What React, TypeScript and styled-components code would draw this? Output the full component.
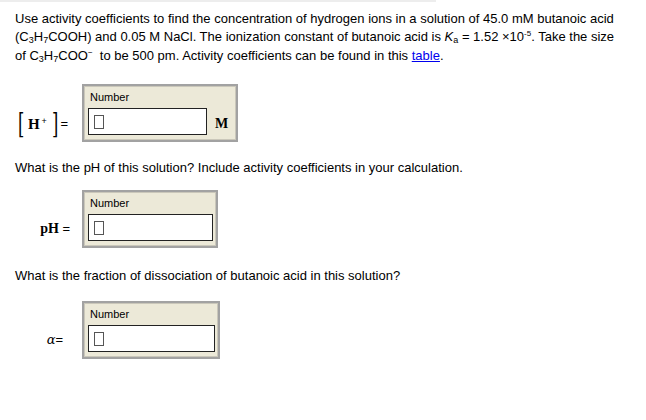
import React from "react";
import styled, { createGlobalStyle } from "styled-components";

const Global = createGlobalStyle`
  html, body { margin: 0; padding: 0; background: #fff; }
  body { font-family: "Liberation Sans", Arial, sans-serif; color: #000; }
`;

const Page = styled.div`
  width: 646px;
  height: 420px;
  box-sizing: border-box;
  padding: 10px 0 0 15px;
  position: relative;
`;

const TopRule = styled.div`
  position: absolute;
  left: 0;
  top: 0;
  width: 436px;
  height: 2px;
  background: #ededed;
`;

const Para = styled.p`
  margin: 0;
  font-size: 13px;
  line-height: 18px;
  white-space: nowrap;
`;

const Line = styled.span<{ $pt?: number }>`
  display: block;
  padding-top: ${(p) => p.$pt ?? 0}px;
`;

const Sub = styled.sub`
  font-size: 9px;
  vertical-align: -2px;
  line-height: 0;
`;

const Sup = styled.sup`
  font-size: 8px;
  vertical-align: 5px;
  line-height: 0;
`;

const Link = styled.a`
  color: #0000ee;
  text-decoration: underline;
`;

const Row = styled.div<{ $mt: number }>`
  display: flex;
  align-items: flex-end;
  margin-top: ${(p) => p.$mt}px;
`;

const Label = styled.div<{ $pr: number; $pb: number }>`
  flex: none;
  width: 67px;
  box-sizing: border-box;
  display: flex;
  justify-content: flex-end;
  align-items: center;
  padding-right: ${(p) => p.$pr}px;
  padding-bottom: ${(p) => p.$pb}px;
  font-family: "Liberation Serif", "Times New Roman", serif;
  font-size: 14px;
  line-height: 16px;
  white-space: nowrap;
`;

const Bold = styled.span`
  font-weight: bold;
`;

const Bracket = styled.span<{ $ml?: number; $mr?: number }>`
  font-family: "DejaVu Serif", serif;
  font-size: 27px;
  font-weight: normal;
  line-height: 16px;
  transform: scaleX(0.6);
  display: inline-block;
  margin-left: ${(p) => p.$ml ?? 0}px;
  margin-right: ${(p) => p.$mr ?? 0}px;
`;

const HBase = styled.span`
  font-weight: bold;
  font-size: 15px;
  margin-left: 1px;
`;

const Plus = styled.span`
  font-family: "Liberation Sans", Arial, sans-serif;
  font-size: 9px;
  align-self: flex-start;
  margin: -3px 3px 0 2px;
`;

const Alpha = styled.span`
  font-family: "DejaVu Serif", serif;
  font-style: italic;
  font-size: 13px;
`;

const Eq = styled.span`
  font-family: "Liberation Sans", Arial, sans-serif;
  font-size: 13px;
`;

const Box = styled.div<{ $w: number }>`
  flex: none;
  width: ${(p) => p.$w}px;
  box-sizing: border-box;
  background: #ece9d8;
  border: 2px solid #a2a2a2;
  box-shadow: inset 1px 1px 0 #cac7ba, inset -1px -1px 0 #cac7ba;
  padding: 5px 3px 5px 4px;
`;

const BoxLabel = styled.div`
  font-size: 11px;
  margin: 0 0 4px 2px;
  line-height: 13px;
`;

const FieldRow = styled.div`
  display: flex;
  align-items: center;
  gap: 8px;
`;

const Field = styled.div<{ $w: number }>`
  flex: none;
  width: ${(p) => p.$w}px;
  height: 27px;
  box-sizing: border-box;
  background: #fff;
  border: 1px solid #222;
  display: flex;
  align-items: center;
  padding-left: 5px;
`;

const Caret = styled.div`
  width: 10px;
  height: 14px;
  box-sizing: border-box;
  border: 1px solid #555;
  background: #fff;
`;

const Unit = styled.span`
  font-family: "Liberation Serif", "Times New Roman", serif;
  font-weight: bold;
  font-size: 14px;
  padding-top: 5px;
`;

const Question = styled.p<{ $mt: number }>`
  margin: ${(p) => p.$mt}px 0 0 0;
  font-size: 13px;
  line-height: 16px;
`;

export default function App() {
  return (
    <Page>
      <Global />
      <TopRule />
      <Para>
        <Line>
          Use activity coefficients to find the concentration of hydrogen ions in a solution of 45.0 mM butanoic acid
        </Line>
        <Line>
          (C<Sub>3</Sub>H<Sub>7</Sub>COOH) and 0.05 M NaCl. The ionization constant of butanoic acid is <i>K</i>
          <Sub>a</Sub> = 1.52 ×10<Sup>-5</Sup>. Take the size
        </Line>
        <Line $pt={1}>
          of C<Sub>3</Sub>H<Sub>7</Sub>COO<Sup>−</Sup>&nbsp; to be 500 pm. Activity coefficients can be found in
          this <Link href="#">table</Link>.
        </Line>
      </Para>

      <Row $mt={19}>
        <Label $pr={14} $pb={10}>
          <Bracket>[</Bracket>
          <HBase>H</HBase>
          <Plus>+</Plus>
          <Bracket>]</Bracket>
          <Eq>=</Eq>
        </Label>
        <Box $w={156}>
          <BoxLabel>Number</BoxLabel>
          <FieldRow>
            <Field $w={119}>
              <Caret />
            </Field>
            <Unit>M</Unit>
          </FieldRow>
        </Box>
      </Row>

      <Question $mt={18}>What is the pH of this solution? Include activity coefficients in your calculation.</Question>

      <Row $mt={14}>
        <Label $pr={12} $pb={11}>
          <Bold>pH</Bold>&nbsp;<Eq>=</Eq>
        </Label>
        <Box $w={136}>
          <BoxLabel>Number</BoxLabel>
          <FieldRow>
            <Field $w={125}>
              <Caret />
            </Field>
          </FieldRow>
        </Box>
      </Row>

      <Question $mt={20}>What is the fraction of dissociation of butanoic acid in this solution?</Question>

      <Row $mt={17}>
        <Label $pr={19} $pb={11}>
          <Alpha>α</Alpha>
          <Eq>=</Eq>
        </Label>
        <Box $w={138}>
          <BoxLabel>Number</BoxLabel>
          <FieldRow>
            <Field $w={127}>
              <Caret />
            </Field>
          </FieldRow>
        </Box>
      </Row>
    </Page>
  );
}
